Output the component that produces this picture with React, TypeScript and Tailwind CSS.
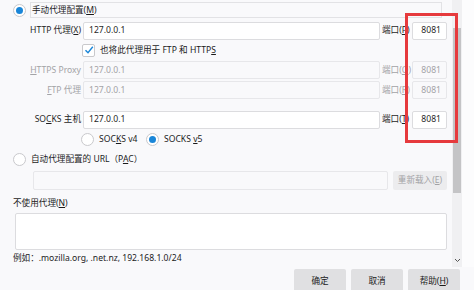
import React from "react";

const U = ({ c }: { c: string }) => <span className="underline underline-offset-1">{c}</span>;

function Radio({ on }: { on?: boolean }) {
  return (
    <span className="w-[13px] h-[13px] rounded-full border border-[#c9c9cc] bg-white flex items-center justify-center shrink-0">
      {on && <span className="w-[7px] h-[7px] rounded-full bg-[#1a86d8]" />}
    </span>
  );
}

function Row({
  label,
  value,
  portLabel,
  disabled,
}: {
  label: React.ReactNode;
  value: string;
  portLabel: React.ReactNode;
  disabled?: boolean;
}) {
  const txt = disabled ? "text-[#a3a3a6]" : "text-[#1f1f1f]";
  const box = disabled
    ? "bg-[#f9f9fb] border-[#e7e7ea]"
    : "bg-white border-[#dcdcdf]";
  return (
    <div className="h-[20px] flex items-center">
      <div className={`w-[81px] text-right ${txt}`}>{label}</div>
      <div className={`ml-[2px] w-[297px] h-[18px] border rounded-[2px] flex items-center pl-[5px] ${box} ${txt}`}>
        {value}
      </div>
      <div className={`w-[30px] pl-[2px] whitespace-nowrap ${txt}`}>{portLabel}</div>
      <div className={`ml-[2px] w-[35px] h-[18px] border rounded-[2px] flex items-center justify-end pr-[5px] ${box} ${txt}`}>
        8081
      </div>
    </div>
  );
}

export default function App() {
  return (
    <div className="w-[474px] h-[290px] overflow-hidden relative bg-[#f9f9fb] flex flex-col text-[8.6px] leading-none text-[#1b1b1b] font-['Noto_Sans','Noto_Sans_CJK_SC',sans-serif]">
      <div className="h-[267px] flex">
        <div className="w-[452px] flex flex-col">
          <div className="h-[21px] flex items-center">
            <span className="ml-[13px]"><Radio on /></span>
            <div className="ml-[4px] w-[412px] h-[16px] border border-[#e2e2e5] flex items-center pl-[1px]">
              手动代理配置(<U c="M" />)
            </div>
          </div>
          <Row label={<>HTTP 代理(<U c="X" />)</>} value="127.0.0.1" portLabel={<>端口(<U c="P" />)</>} />
          <div className="h-[20px] flex items-center">
            <span className="ml-[82px] w-[13px] h-[13px] border border-[#c9c9cc] bg-white rounded-[2px] flex items-center justify-center">
              <svg width="10" height="10" viewBox="0 0 10 10">
                <path d="M1.5 5.2 L4 7.8 L8.8 1.8" fill="none" stroke="#1a86d8" strokeWidth="1.4" />
              </svg>
            </span>
            <span className="ml-[5px]">也将此代理用于 FTP 和 HTTP<U c="S" /></span>
          </div>
          <Row disabled label={<><U c="H" />TTPS Proxy</>} value="127.0.0.1" portLabel={<>端口(<U c="O" />)</>} />
          <Row disabled label={<><U c="F" />TP 代理</>} value="127.0.0.1" portLabel={<>端口(<U c="R" />)</>} />
          <div className="h-[10px]" />
          <Row label={<>SO<U c="C" />KS 主机</>} value="127.0.0.1" portLabel={<>端口(<U c="T" />)</>} />
          <div className="h-[20px] flex items-center">
            <span className="ml-[81px]"><Radio /></span>
            <span className="ml-[5px] w-[47px]">SOC<U c="K" />S v4</span>
            <span><Radio on /></span>
            <span className="ml-[5px]">SOCKS <U c="v" />5</span>
          </div>
          <div className="h-[20px] flex items-center">
            <span className="ml-[13px]"><Radio /></span>
            <span className="ml-[5px]">自动代理配置的 URL（P<U c="A" />C）</span>
          </div>
          <div className="h-[22px] flex items-center pt-[1px]">
            <div className="ml-[33px] w-[355px] h-[19px] border border-[#e7e7ea] rounded-[2px] bg-[#f9f9fb]" />
            <div className="ml-[5px] w-[54px] h-[19px] rounded-[2px] bg-[#ececee] text-[#a3a3a6] flex items-center justify-center">
              重新载入(<U c="E" />)
            </div>
          </div>
          <div className="h-[22px] flex items-center pt-[4px] pl-[13px]">
            不使用代理(<U c="N" />)
          </div>
          <div className="ml-[15px] w-[432px] h-[38px] border border-[#dcdcdf] rounded-[2px] bg-white" />
          <div className="h-[17px] flex items-center pl-[13px]">例如：.mozilla.org, .net.nz, 192.168.1.0/24</div>
        </div>
        <div className="w-[10px] bg-[#f0f0f2] flex flex-col items-center">
          <div className="mt-[28px] w-[8px] h-[165px] bg-[#c4c4c6]" />
          <div className="flex-1" />
          <svg width="7" height="5" viewBox="0 0 7 5" className="mb-[4px]">
            <path d="M1 1 L3.5 3.5 L6 1" fill="none" stroke="#555" strokeWidth="1" />
          </svg>
        </div>
        <div className="flex-1 bg-[#fcfcfd]" />
      </div>
      <div className="h-[23px] flex justify-end pr-[14px] gap-[5px] pt-[2px]">
        <div className="w-[52px] h-[24px] rounded-[2px] bg-[#e0e0e2] flex items-center justify-center">确定</div>
        <div className="w-[52px] h-[24px] rounded-[2px] bg-[#e0e0e2] flex items-center justify-center">取消</div>
        <div className="w-[52px] h-[24px] rounded-[2px] bg-[#e0e0e2] flex items-center justify-center">帮助(<U c="H" />)</div>
      </div>
      <div className="absolute left-[405px] top-[13px] w-[53px] h-[130px] border-[3px] border-[#e63a3d]" />
    </div>
  );
}
